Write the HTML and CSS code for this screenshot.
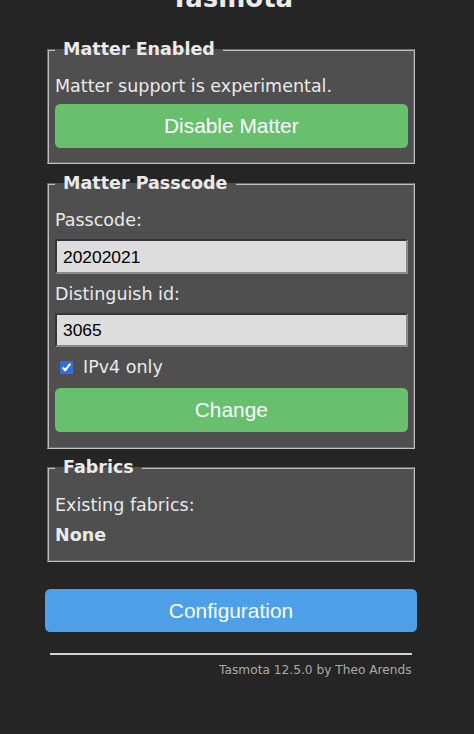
FILE: index.html
```html
<!DOCTYPE html>
<html lang="en">
<head>
<meta charset="utf-8">
<title>Tasmota - Matter</title>
<link rel="stylesheet" href="styles.css">
</head>
<body>
<div class="page">
  <div class="title">Tasmota</div>

  <fieldset class="box">
    <legend class="box-title">&nbsp;Matter Enabled&nbsp;</legend>
    <p class="line line-first">Matter support is experimental.</p>
    <button class="btn btn-green btn-first" type="button">Disable Matter</button>
  </fieldset>

  <fieldset class="box box-next">
    <legend class="box-title">&nbsp;Matter Passcode&nbsp;</legend>
    <p class="line line-first">Passcode:</p>
    <input class="field field-a" type="text" value="20202021">
    <p class="line line-label">Distinguish id:</p>
    <input class="field field-b" type="text" value="3065">
    <p class="line line-label"><input class="check" type="checkbox" checked>IPv4 only</p>
    <button class="btn btn-green btn-change" type="button">Change</button>
  </fieldset>

  <fieldset class="box box-next box-fabrics">
    <legend class="box-title">&nbsp;Fabrics&nbsp;</legend>
    <p class="line line-first">Existing fabrics:</p>
    <p class="line line-follow strong">None</p>
  </fieldset>

  <button class="btn btn-blue btn-config" type="button">Configuration</button>

  <div class="footer">
    <hr class="rule">
    <a class="credit" href="#">Tasmota 12.5.0 by Theo Arends</a>
  </div>
</div>
</body>
</html>
```

FILE: styles.css
```css
html, body {
  margin: 0;
  padding: 0;
  background: #252525;
}

body {
  font-family: "DejaVu Sans", Verdana, sans-serif;
  font-size: 17.5px;
  line-height: 21.5px;
  color: #eaeaea;
}

.page {
  width: 372px;
  margin-left: 45px;
}

.title {
  text-align: center;
  font-weight: bold;
  font-size: 26px;
  line-height: 30px;
  margin: -17px 0 26.25px;
  padding-left: 2px;
}

.box {
  margin: 0 2px;
  padding: 0 5.4px 14.8px 6px;
  background: #4f4f4f;
  border: 2px groove #c0c0c0;
  min-width: 0;
}

.box-next {
  margin-top: 8.8px;
}

.box-fabrics {
  padding-bottom: 12.8px;
}

.box-fabrics .line-first {
  margin-top: 16.3px;
}

.box-title {
  font-weight: bold;
  padding: 0 2px;
  line-height: 21.5px;
}

.line {
  margin: 0;
}

.line-first {
  margin-top: 14.8px;
}

.line-label {
  margin-top: 9.8px;
}

.line-follow {
  margin-top: 8.6px;
}

.strong {
  font-weight: bold;
}

.field {
  display: block;
  width: 100%;
  box-sizing: border-box;
  margin: 0;
  padding: 5.4px 5.4px 5.4px 6px;
  font-family: "Liberation Sans", Arial, sans-serif;
  font-size: 17.4px;
  line-height: 20px;
  background: #dddddd;
  color: #000000;
  border: 2px inset #8a8a8a;
  border-radius: 0;
}

.field-a {
  margin-top: 8.1px;
}

.field-b {
  margin-top: 7.4px;
}

.check {
  width: 13px;
  height: 13px;
  margin: 0 10px 0 5px;
  vertical-align: -1px;
  accent-color: #2f6fe4;
}

.btn {
  display: block;
  width: 100%;
  margin: 0;
  padding: 1px 6px;
  border: 0;
  border-radius: 5.2px;
  font-family: "Liberation Sans", Arial, sans-serif;
  font-size: 20.9px;
  line-height: 41.8px;
  color: #faffff;
  cursor: pointer;
}

.btn-first {
  margin-top: 6.8px;
}

.btn-change {
  margin-top: 9.4px;
}

.btn-green {
  background: #68bf6e;
}

.btn-blue {
  background: #4da0e8;
}

.btn-config {
  margin-top: 27px;
}

.footer {
  padding: 0 5.4px;
  text-align: right;
  font-size: 12.2px;
  line-height: 14px;
}

.rule {
  margin: 20.2px 0 8.7px;
  border: 0;
  border-top: 2px solid #d2d2d2;
  height: 0;
}

.credit {
  color: #aaaaaa;
  text-decoration: none;
}
```
